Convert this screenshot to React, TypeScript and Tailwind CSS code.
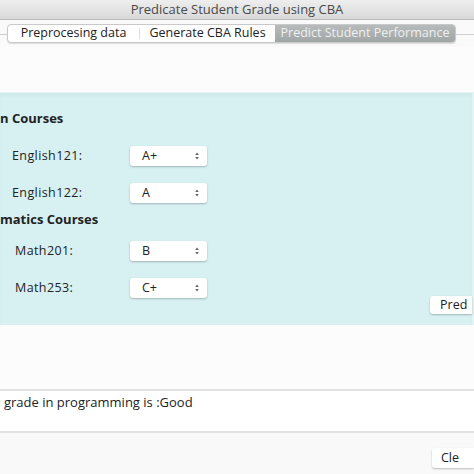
import React from 'react';

const font = { fontFamily: '"Open Sans", "DejaVu Sans", sans-serif' };

function Stepper() {
  return (
    <svg width="6" height="10" viewBox="0 0 6 10" className="shrink-0">
      <path d="M1.2 4 L3 1.6 L4.8 4 Z" fill="#666" />
      <path d="M1.2 6 L3 8.4 L4.8 6 Z" fill="#666" />
    </svg>
  );
}

function GradeSelect({ value }: { value: string }) {
  return (
    <div className="w-[77px] h-[20px] bg-white rounded-[3px] shadow-[0_1px_2px_rgba(0,0,0,0.25)] flex items-center justify-between pl-[12px] pr-[7px] text-[12.5px] text-[#222]">
      <span>{value}</span>
      <Stepper />
    </div>
  );
}

function CourseRow({ label, value, indent }: { label: string; value: string; indent: string }) {
  return (
    <div className="flex items-center h-[20px]">
      <span className={`${indent} w-[130px] text-[12.5px] text-[#222] tracking-[0.4px]`}>{label}</span>
      <GradeSelect value={value} />
    </div>
  );
}

export default function App() {
  return (
    <div className="w-[474px] h-[474px] overflow-hidden bg-[#fafafa] flex flex-col" style={font}>
      {/* title bar */}
      <div className="h-[20px] shrink-0 bg-gradient-to-b from-[#eeeeee] to-[#d9d9d9] border-b border-[#b9b9b9] flex items-center justify-center text-[13px] text-[#4a4a4a]">
        Predicate Student Grade using CBA
      </div>

      {/* tabs */}
      <div className="relative h-[27px] shrink-0 pt-[4px] pl-[7px]">
        <div className="absolute left-0 right-0 top-[14px] h-px bg-[#cfcfcf]" />
        <div className="relative flex w-[449px] h-[19px] bg-white rounded-[4px] border border-[#c9c9c9] shadow-[0_1px_1px_rgba(0,0,0,0.12)] text-[12.5px] overflow-hidden">
          <div className="w-[132px] flex items-center justify-center text-[#222] border-r border-[#dedede] my-[3px]">
            Preprocesing data
          </div>
          <div className="w-[135px] flex items-center justify-center text-[#222]">Generate CBA Rules</div>
          <div className="flex-1 flex items-center justify-center bg-gradient-to-b from-[#b7bbbb] to-[#a0a5a5] text-[#eef0f0]">
            Predict Student Performance
          </div>
        </div>
      </div>

      {/* white gap */}
      <div className="h-[45px] shrink-0 bg-[#fcfcfc]" />

      {/* course panel */}
      <div className="h-[233px] shrink-0 bg-[#d7f1f3] border-t border-[#e6f3f4] border-r-2 border-r-[#e4f3f4] shadow-[inset_0_3px_3px_rgba(0,0,0,0.03)] flex flex-col pt-[17px]">
        <div className="text-[13px] font-bold text-[#222] leading-[16px]">n Courses</div>
        <div className="mt-[20px] flex flex-col gap-[17px]">
          <CourseRow label="English121:" value="A+" indent="pl-[12px]" />
          <CourseRow label="English122:" value="A" indent="pl-[12px]" />
        </div>
        <div className="mt-[8px] text-[13px] font-bold text-[#222] leading-[16px]">matics Courses</div>
        <div className="mt-[14px] flex flex-col gap-[17px]">
          <CourseRow label="Math201:" value="B" indent="pl-[15px]" />
          <CourseRow label="Math253:" value="C+" indent="pl-[15px]" />
        </div>
        <div className="flex justify-end -mt-[2px]">
          <div className="w-[42px] h-[18px] bg-white rounded-l-[3px] shadow-[0_1px_2px_rgba(0,0,0,0.25)] flex items-center pl-[10px] text-[12.5px] text-[#222] overflow-hidden whitespace-nowrap">
            Pred
          </div>
        </div>
      </div>

      {/* white area */}
      <div className="h-[66px] shrink-0 bg-[#fcfcfc] border-b-2 border-[#e2e2e2]" />

      {/* result field */}
      <div className="h-[42px] shrink-0 bg-white border-b-2 border-[#e2e2e2] pl-[4px] pt-[2px] text-[13px] text-[#222]">
        grade in programming is :Good
      </div>

      {/* bottom */}
      <div className="flex-1 bg-[#f9f9f9] flex justify-end pt-[15px]">
        <div className="w-[42px] h-[20px] bg-white rounded-l-[3px] shadow-[0_1px_2px_rgba(0,0,0,0.25)] flex items-center pl-[9px] text-[12.5px] text-[#222]">
          Cle
        </div>
      </div>
    </div>
  );
}
